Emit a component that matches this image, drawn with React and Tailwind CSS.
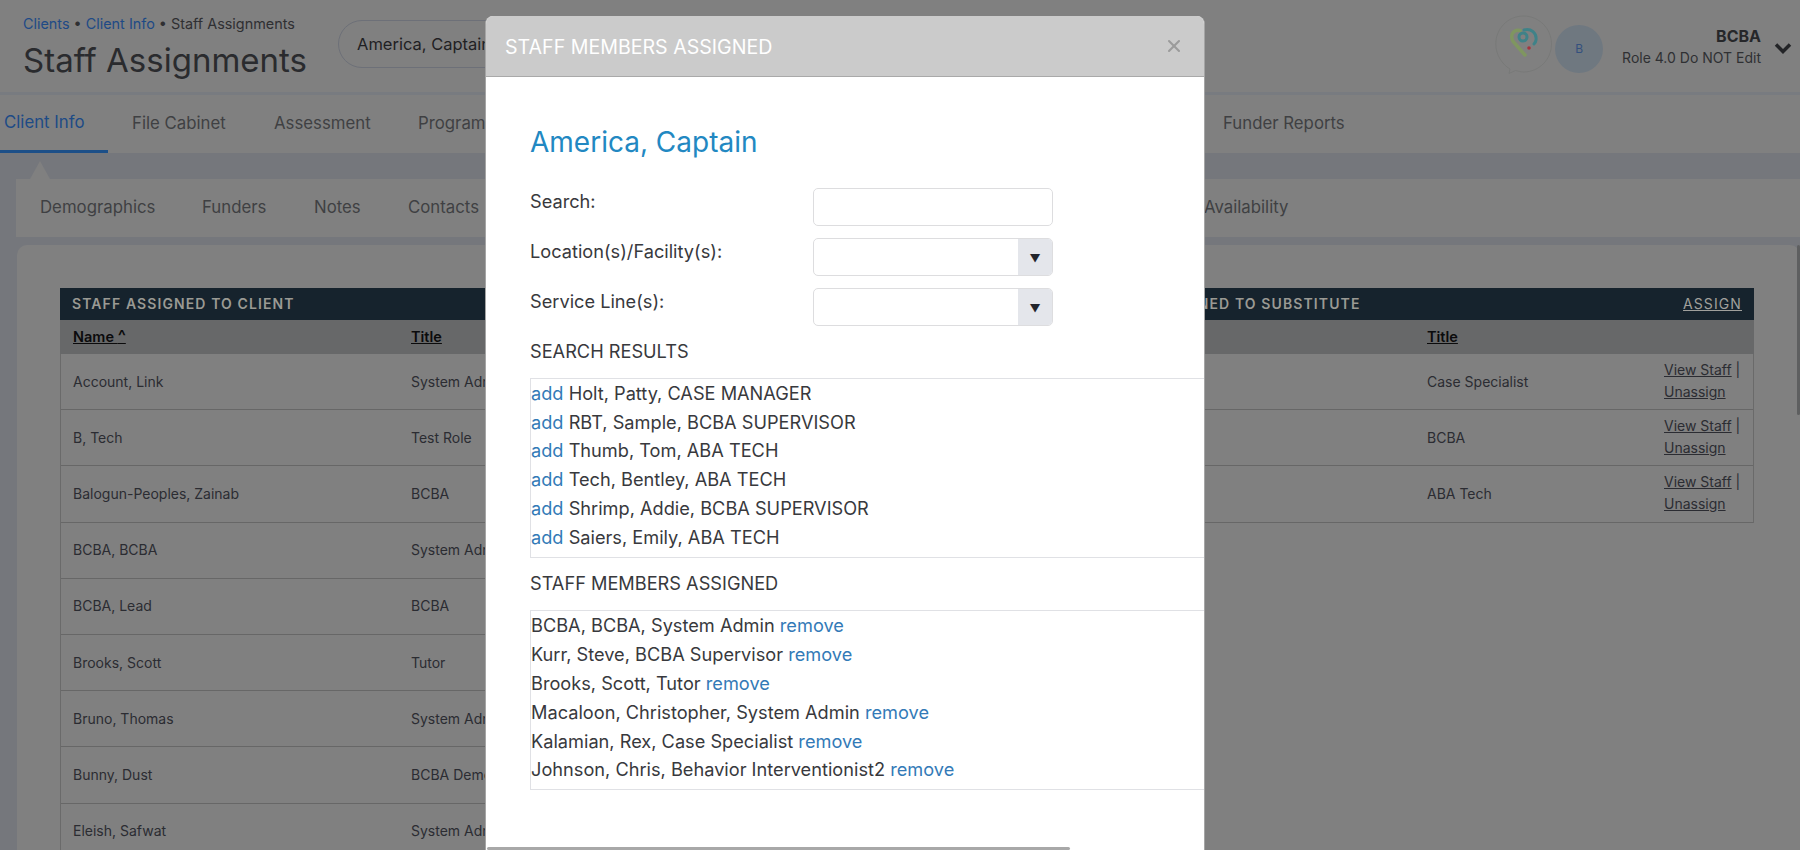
import React from "react";
import { X } from "lucide-react";

const font = { fontFamily: '"Inter", "Liberation Sans", sans-serif' };

const leftRows = [
  ["Account, Link", "System Admin"],
  ["B, Tech", "Test Role"],
  ["Balogun-Peoples, Zainab", "BCBA"],
  ["BCBA, BCBA", "System Admin"],
  ["BCBA, Lead", "BCBA"],
  ["Brooks, Scott", "Tutor"],
  ["Bruno, Thomas", "System Admin"],
  ["Bunny, Dust", "BCBA Demo"],
  ["Eleish, Safwat", "System Admin"],
];

const rightRows = [
  ["Kurr, Steve", "Case Specialist"],
  ["Tech, Bentley", "BCBA"],
  ["Saiers, Emily", "ABA Tech"],
];

const searchResults = [
  "Holt, Patty, CASE MANAGER",
  "RBT, Sample, BCBA SUPERVISOR",
  "Thumb, Tom, ABA TECH",
  "Tech, Bentley, ABA TECH",
  "Shrimp, Addie, BCBA SUPERVISOR",
  "Saiers, Emily, ABA TECH",
];

const assigned = [
  "BCBA, BCBA, System Admin",
  "Kurr, Steve, BCBA Supervisor",
  "Brooks, Scott, Tutor",
  "Macaloon, Christopher, System Admin",
  "Kalamian, Rex, Case Specialist",
  "Johnson, Chris, Behavior Interventionist2",
];

function Logo() {
  return (
    <svg width="58" height="62" viewBox="0 0 58 62" fill="none" className="shrink-0">
      <path
        d="M28.500 3C13 3 .8 15.500.8 31c0 11 6.500 20.500 14.200 25l-1 4.500 6.500-3c2.500.6 5.500 1.500 8 1.500C44 59 56.500 46.500 56.500 31S44 3 28.500 3z"
        stroke="#767776"
        strokeWidth="0.8"
      />
      <path d="M25 17.500C19 16 14 22 18.500 29L30 42" stroke="#7f9660" strokeWidth="3.500" strokeLinecap="round" />
      <circle cx="28" cy="24" r="4" stroke="#3f8288" strokeWidth="3" />
      <path d="M29 17c7-2 13 3 12 10-.2 2-1 3-2 4" stroke="#3f8288" strokeWidth="3" strokeLinecap="round" />
      <circle cx="34" cy="35" r="1.800" fill="#a5343d" />
    </svg>
  );
}

function PageHeader() {
  return (
    <header className="flex h-[92px] items-start border-b-[3px] border-[#787b80] bg-[#808080] box-content">
      <div className="ml-[23px] w-[315px] pt-[14px]">
        <div className="whitespace-nowrap text-[14.400px] leading-[20px] text-[#2f2f32]">
          <span className="text-[#1e4a86]">Clients</span> • <span className="text-[#1e4a86]">Client Info</span> • Staff
          Assignments
        </div>
        <h1 className="mt-[3px] whitespace-nowrap text-[33px] leading-[46px] text-[#2a2b2e]">Staff Assignments</h1>
      </div>
      <div className="mt-[20px] flex h-[48px] w-[300px] items-center rounded-full border border-[#6d7078] pl-[18px] text-[16.500px] text-[#1f2023]">
        America, Captain
      </div>
      <div className="ml-auto mt-[13px] flex items-start">
        <Logo />
        <div className="ml-[2px] mt-[12px] flex size-[48px] items-center justify-center rounded-full bg-[#6f7880] text-[12px] text-[#34507e]">
          B
        </div>
        <div className="ml-[19px] mt-[10px] text-right">
          <div className="text-[16px] font-bold leading-[26px] text-[#26272a]">BCBA</div>
          <div className="text-[14px] leading-[18px] text-[#2f3033]">Role 4.0 Do NOT Edit</div>
        </div>
        <svg width="18" height="12" viewBox="0 0 18 12" fill="none" className="ml-[13px] mr-[8px] mt-[29px]">
          <path d="M2 2.500 9 9.500 16 2.500" stroke="#232427" strokeWidth="3.500" />
        </svg>
      </div>
    </header>
  );
}

function NavBars() {
  return (
    <>
      <nav className="flex h-[58px] items-center bg-[#808080] text-[16.800px] text-[#3f4043]">
        <div className="relative flex h-[58px] w-[108px] items-center border-b-[3px] border-[#1c4f88] pl-[4px] text-[#1d4b86]">
          Client Info
        </div>
        <span className="ml-[24px] w-[142px]">File Cabinet</span>
        <span className="w-[144px]">Assessment</span>
        <span className="w-[805px]">Programs</span>
        <span>Funder Reports</span>
      </nav>
      <div className="relative h-[26px]">
        <div className="absolute left-[30px] top-[8px] size-0 border-x-[10px] border-b-[18px] border-x-transparent border-b-[#808080]" />
      </div>
      <div className="ml-[16px] flex h-[58px] items-center bg-[#808080] pb-[1px] pl-[24px] text-[16.800px] text-[#3f4043]">
        <span className="w-[162px]">Demographics</span>
        <span className="w-[112px]">Funders</span>
        <span className="w-[94px]">Notes</span>
        <span className="w-[796px]">Contacts</span>
        <span>Availability</span>
      </div>
    </>
  );
}

function StaffTable({ title, action, rows, withLinks }) {
  return (
    <div className="w-[678px]">
      <div className="flex h-[32px] items-center justify-between bg-[#16232d] px-[12px] pb-[1px] text-[14px] font-semibold tracking-[1.100px] text-[#9a9a94]">
        <span>{title}</span>
        {action && <span className="font-normal text-[#a0a09c] underline">{action}</span>}
      </div>
      <div className="grid h-[34px] grid-cols-[351px_1fr] items-center bg-[#676869] text-[14.500px] font-semibold text-[#0b0b0c] underline">
        <span className="pl-[13px]">
          Name <span className="text-[17px] leading-none">^</span>
        </span>
        <span>Title</span>
      </div>
      <div className="border-x border-[#6a6a6a]">
        {rows.map(([name, role]) => (
          <div
            key={name}
            className="grid h-[56.200px] grid-cols-[350px_237px_1fr] items-center border-b border-[#676767] pb-[1px] text-[14px] text-[#2b2c32]"
          >
            <span className="pl-[12px]">{name}</span>
            <span>{role}</span>
            {withLinks && (
              <span className="leading-[22.500px]">
                <span className="underline">View Staff</span> | <span className="underline">Unassign</span>
              </span>
            )}
          </div>
        ))}
      </div>
    </div>
  );
}

function FormRow({ label, select }) {
  return (
    <div className="grid grid-cols-[283px_240px] items-start">
      <label className="leading-[26px]">{label}</label>
      <div className="flex h-[38px] overflow-hidden rounded-[5px] border border-[#dddddf]">
        <div className="flex-1" />
        {select && (
          <div className="flex w-[34px] items-center justify-center bg-[#e4e6eb] pt-[2px] text-[11px] text-[#22252b]">▼</div>
        )}
      </div>
    </div>
  );
}

function AssignModal() {
  return (
    <div className="absolute left-[485px] top-[16px] h-[850px] w-[720px] overflow-hidden rounded-t-[8px] border-x border-[#a5a5a5] bg-white">
      <div className="flex h-[61px] items-center justify-between border-b border-[#a9a9a9] bg-[#cbcbcb] pl-[19px] pr-[20px]">
        <span className="pt-[3px] text-[19.600px] text-white">STAFF MEMBERS ASSIGNED</span>
        <X size={20} strokeWidth={2.5} className="text-[#9b9b9b]" />
      </div>
      <div className="w-[760px] pl-[44px] text-[18.200px] leading-[28.800px] text-[#38393d]">
        <h2 className="mt-[46px] mb-[27px] text-[28px] leading-[38px] text-[#2288c2]">America, Captain</h2>
        <div className="flex flex-col gap-[12px]">
          <FormRow label="Search:" />
          <FormRow label="Location(s)/Facility(s):" select />
          <FormRow label="Service Line(s):" select />
        </div>
        <div className="mt-[11px] mb-[12px]">SEARCH RESULTS</div>
        <div className="border border-[#e0e1e5] pb-[5px]">
          {searchResults.map((row) => (
            <div key={row}>
              <span className="text-[#337ab7]">add</span> {row}
            </div>
          ))}
        </div>
        <div className="mt-[11px] mb-[13px]">STAFF MEMBERS ASSIGNED</div>
        <div className="border border-[#e0e1e5] pb-[5px]">
          {assigned.map((row) => (
            <div key={row}>
              {row} <span className="text-[#337ab7]">remove</span>
            </div>
          ))}
        </div>
      </div>
      <div className="absolute bottom-[16px] left-[1px] h-[3px] w-[583px] rounded-full bg-[#a8a8a8]" />
    </div>
  );
}

export default function App() {
  return (
    <div className="relative h-[850px] w-[1800px] overflow-hidden bg-[#75777c]" style={font}>
      <PageHeader />
      <NavBars />
      <main className="ml-[17px] mt-[8px] h-[640px] rounded-t-[10px] bg-[#808080] pl-[43px] pr-[29px] pt-[43px]">
        <div className="mr-[17px] flex items-start justify-between">
          <StaffTable title="STAFF ASSIGNED TO CLIENT" rows={leftRows} />
          <StaffTable title="CLIENT ASSIGNED TO SUBSTITUTE" action="ASSIGN" rows={rightRows} withLinks />
        </div>
      </main>
      <div className="absolute right-0 top-[245px] h-[170px] w-[3px] rounded-full bg-[#5e5f60]" />
      <AssignModal />
    </div>
  );
}
